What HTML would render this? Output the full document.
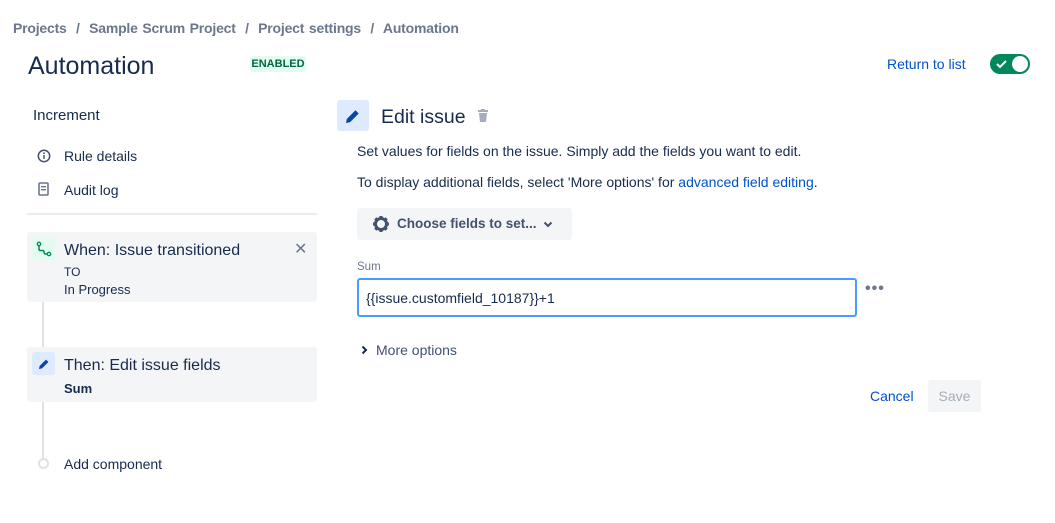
<!DOCTYPE html>
<html><head><meta charset="utf-8"><style>
*{margin:0;padding:0;box-sizing:border-box}
body{width:1055px;height:523px;background:#fff;font-family:"Liberation Sans",sans-serif;color:#172b4d;position:relative;overflow:hidden;font-size:14px}
.a{position:absolute;white-space:nowrap}
</style></head><body>
<div class="a" style="left:13px;top:20px;font-size:14px;font-weight:bold;color:#6b778c;letter-spacing:-0.2px;word-spacing:1px">Projects &nbsp;/&nbsp; Sample Scrum Project &nbsp;/&nbsp; Project settings &nbsp;/&nbsp; Automation</div>
<div class="a" style="left:28px;top:52px;font-size:25px;">Automation</div>
<div class="a" style="left:250px;top:56px;width:56px;height:16px;background:#e3fcef;border-radius:3px;color:#006644;font-size:11px;font-weight:bold;text-align:center;line-height:16px">ENABLED</div>
<div class="a" style="left:887px;top:56px;color:#0052cc;font-size:14px">Return to list</div>
<div class="a" style="left:990px;top:54px;width:40px;height:20px;border-radius:10px;background:#00875a">
<svg class="a" style="left:6px;top:5px" width="11" height="10" viewBox="0 0 11 10"><path d="M1 5l3 3 6-6" stroke="#fff" stroke-width="2" fill="none"/></svg>
<div class="a" style="left:22px;top:2px;width:16px;height:16px;border-radius:8px;background:#fff"></div></div>

<div class="a" style="left:33px;top:107px;font-size:15px">Increment</div>
<svg class="a" style="left:37px;top:149px" width="14" height="14" viewBox="0 0 14 14"><circle cx="7" cy="7" r="5.7" stroke="#42526e" stroke-width="1.5" fill="none"/><rect x="6.3" y="6" width="1.4" height="4" fill="#42526e"/><circle cx="7" cy="4.2" r=".9" fill="#42526e"/></svg>
<div class="a" style="left:64px;top:148px">Rule details</div>
<svg class="a" style="left:38px;top:182px" width="11" height="14" viewBox="0 0 11 14"><rect x="1" y="1" width="9" height="12" rx="1" stroke="#6b778c" stroke-width="1.6" fill="none"/><rect x="3" y="4" width="5" height="1.4" fill="#6b778c"/><rect x="3" y="7" width="5" height="1.4" fill="#6b778c"/></svg>
<div class="a" style="left:64px;top:182px">Audit log</div>
<div class="a" style="left:27px;top:213px;width:290px;height:2px;background:#ebecf0"></div>

<div class="a" style="left:42px;top:260px;width:2px;height:200px;background:#dfe1e6"></div>
<div class="a" style="left:27px;top:232px;width:290px;height:70px;background:#f4f5f7;border-radius:3px"></div>
<div class="a" style="left:32px;top:237px;width:23px;height:23px;background:#e3fcef;border-radius:3px">
<svg class="a" style="left:4px;top:4px" width="16" height="16" viewBox="0 0 16 16"><circle cx="3" cy="3" r="1.7" stroke="#00875a" stroke-width="1.3" fill="none"/><circle cx="13" cy="13" r="1.7" stroke="#00875a" stroke-width="1.3" fill="none"/><path d="M3 5v3q0 1.5 1.5 1.5h2q1.5 0 1.5 1.5v0q0 2 2 2h1" stroke="#00875a" stroke-width="1.5" fill="none"/></svg></div>
<div class="a" style="left:64px;top:242px;font-size:16px">When: Issue transitioned</div>
<div class="a" style="left:294px;top:239px;font-size:16px;color:#6b778c">✕</div>
<div class="a" style="left:64px;top:265px;font-size:12px">TO</div>
<div class="a" style="left:64px;top:282px;font-size:13px">In Progress</div>

<div class="a" style="left:27px;top:347px;width:290px;height:55px;background:#f4f5f7;border-radius:3px"></div>
<div class="a" style="left:32px;top:352px;width:23px;height:23px;background:#deebff;border-radius:3px">
<svg class="a" style="left:6px;top:6px" width="12" height="12" viewBox="0 0 12 12"><path d="M1 11l.6-3L8 1.6l2.4 2.4L4 10.4z" fill="#0747a6"/></svg></div>
<div class="a" style="left:64px;top:357px;font-size:16px">Then: Edit issue fields</div>
<div class="a" style="left:64px;top:381px;font-size:13px;font-weight:bold">Sum</div>
<div class="a" style="left:38px;top:458px;width:11px;height:11px;border-radius:6px;border:2px solid #dfe1e6;background:#fff"></div>
<div class="a" style="left:64px;top:456px">Add component</div>

<div class="a" style="left:337px;top:100px;width:32px;height:31px;background:#deebff;border-radius:3px">
<svg class="a" style="left:8px;top:8px" width="16" height="16" viewBox="0 0 16 16"><path d="M1 15l.8-4L10.5 2.3l3.2 3.2L5 14.2z" fill="#0747a6"/></svg></div>
<div class="a" style="left:381px;top:106px;font-size:19.5px">Edit issue</div>
<svg class="a" style="left:477px;top:109px" width="12" height="13" viewBox="0 0 12 13"><rect x="1" y="1" width="10" height="2" fill="#a5adba"/><rect x="4" y="0" width="4" height="2" fill="#a5adba"/><path d="M2 4h8l-1 9H3z" fill="#a5adba"/></svg>
<div class="a" style="left:357px;top:143px">Set values for fields on the issue. Simply add the fields you want to edit.</div>
<div class="a" style="left:357px;top:174px">To display additional fields, select 'More options' for <span style="color:#0052cc">advanced field editing</span>.</div>
<div class="a" style="left:357px;top:208px;width:215px;height:32px;background:#f4f5f7;border-radius:3px"></div>
<svg class="a" style="left:372px;top:215px" width="18" height="18" viewBox="0 0 18 18"><circle cx="9" cy="9" r="5.5" stroke="#42526e" stroke-width="3" fill="none"/><g stroke="#42526e" stroke-width="3"><path d="M9 1v3M9 14v3M1 9h3M14 9h3M3.3 3.3l2.1 2.1M12.6 12.6l2.1 2.1M3.3 14.7l2.1-2.1M12.6 5.4l2.1-2.1"/></g></svg>
<div class="a" style="left:397px;top:216px;color:#42526e;font-weight:bold;font-size:13.5px">Choose fields to set...</div>
<svg class="a" style="left:543px;top:221px" width="10" height="7" viewBox="0 0 10 7"><path d="M1.5 1.5l3.5 3.5 3.5-3.5" stroke="#42526e" stroke-width="2" fill="none"/></svg>

<div class="a" style="left:357px;top:261px;font-size:11.5px;color:#6b778c">Sum</div>
<div class="a" style="left:357px;top:278px;width:500px;height:39px;border:2px solid #4c9aff;border-radius:3px"></div>
<div class="a" style="left:366px;top:290px">{{issue.customfield_10187}}+1</div>
<div class="a" style="left:865px;top:280px;font-size:16px;color:#6b778c;letter-spacing:1px;font-weight:bold">•••</div>
<svg class="a" style="left:361px;top:345px" width="7" height="10" viewBox="0 0 7 10"><path d="M1.5 1.5l3.5 3.5-3.5 3.5" stroke="#172b4d" stroke-width="2" fill="none"/></svg>
<div class="a" style="left:376px;top:342px;color:#42526e">More options</div>
<div class="a" style="left:870px;top:388px;color:#0052cc">Cancel</div>
<div class="a" style="left:928px;top:380px;width:53px;height:32px;background:#f4f5f7;border-radius:3px;color:#a5adba;text-align:center;line-height:32px">Save</div>
</body></html>
